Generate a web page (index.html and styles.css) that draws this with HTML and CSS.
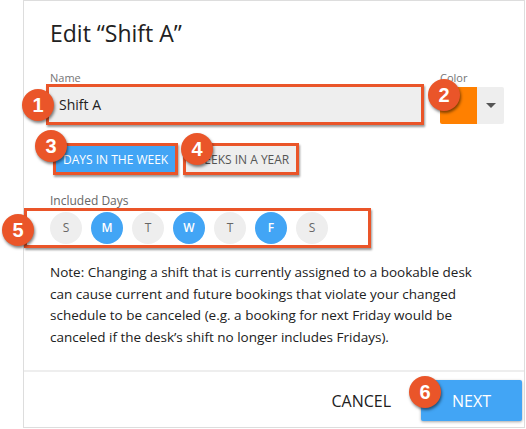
FILE: index.html
```html
<!DOCTYPE html>
<html lang="en">
  <head>
    <meta charset="UTF-8" />
    <meta name="viewport" content="width=device-width, initial-scale=1.0" />
    <title>Edit Shift A</title>
    <link rel="stylesheet" href="styles.css">
  </head>
  <body>
    <div class="dialog">
      <div class="dialog-header">
        <h2 class="dialog-title">Edit “Shift A”</h2>
      </div>
      <div class="dialog-body">
        <div class="field-row">
          <div class="field field-name">
            <label class="field-label">Name</label>
            <input class="name-input marked" type="text" value="Shift A" />
          </div>
          <div class="field field-color">
            <label class="field-label">Color</label>
            <div class="color-picker">
              <span class="swatch"></span>
              <span class="picker-drop"><span class="caret"></span></span>
            </div>
          </div>
        </div>

        <div class="mode-row">
          <button class="mode-btn active marked">DAYS IN THE WEEK</button>
          <button class="mode-btn marked">WEEKS IN A YEAR</button>
        </div>

        <div class="days-label">Included Days</div>
        <div class="days marked">
          <span class="day">S</span>
          <span class="day on">M</span>
          <span class="day">T</span>
          <span class="day on">W</span>
          <span class="day">T</span>
          <span class="day on">F</span>
          <span class="day">S</span>
        </div>

        <p class="note">
          Note: Changing a shift that is currently assigned to a bookable desk
          can cause current and future bookings that violate your changed
          schedule to be canceled (e.g. a booking for next Friday would be
          canceled if the desk’s shift no longer includes Fridays).
        </p>
      </div>
      <div class="dialog-footer">
        <button class="btn-cancel">CANCEL</button>
        <button class="btn-next">NEXT</button>
      </div>

      <!-- numbered callouts -->
      <span class="badge b1">1</span>
      <span class="badge b2">2</span>
      <span class="badge b3">3</span>
      <span class="badge b4">4</span>
      <span class="badge b5">5</span>
      <span class="badge b6">6</span>
    </div>
  </body>
</html>
```

FILE: styles.css
```css
:root {
  --blue: #42a5f5;
  --mark: #ea5529;
  --grey-bg: #eeeeee;
  --text: #212121;
}

body {
  margin: 0;
  background: #fff;
  font-family: "Open Sans", "Liberation Sans", sans-serif;
  color: var(--text);
}

.dialog {
  position: relative;
  box-sizing: border-box;
  width: 502px;
  margin-left: 23px;
  border: 1px solid #dddddd;
  background: #fff;
}

.dialog-header {
  padding: 16px 26px 0;
}
.dialog-title {
  margin: 0;
  font-size: 23px;
  font-weight: 400;
  line-height: 32px;
}

.dialog-body {
  padding: 22px 20px 22px 26px;
}

.field-row {
  display: flex;
  gap: 16px;
}
.field-name {
  flex: 1;
}
.field-color {
  width: 64px;
}
.field-label {
  display: block;
  font-size: 11px;
  line-height: 14px;
  color: #757575;
  margin-bottom: 2px;
}

.marked {
  border: 3px solid var(--mark);
  box-shadow: 1px 2px 2px rgba(0, 0, 0, 0.4);
}

.name-input {
  display: block;
  box-sizing: border-box;
  width: calc(100% + 4px);
  height: 41px;
  margin: -3px 0 0 -4px;
  padding: 0 10px;
  background: var(--grey-bg);
  font-family: inherit;
  font-size: 14px;
  color: var(--text);
  outline: none;
}

.color-picker {
  display: flex;
  height: 37px;
}
.swatch {
  width: 37px;
  background: #ff8000;
  border-radius: 2px 0 0 2px;
}
.picker-drop {
  flex: 1;
  display: flex;
  align-items: center;
  justify-content: center;
  background: var(--grey-bg);
  border-radius: 0 2px 2px 0;
}
.caret {
  width: 0;
  height: 0;
  border-left: 5px solid transparent;
  border-right: 5px solid transparent;
  border-top: 5px solid #555;
  margin-left: 1px;
}

.mode-row {
  display: flex;
  gap: 5px;
  margin: 18px 0 0 3px;
}
.mode-btn {
  height: 32px;
  padding: 0 7px;
  background: var(--grey-bg);
  color: #555;
  font-family: inherit;
  font-size: 12px;
  cursor: pointer;
}
.mode-btn.active {
  background: var(--blue);
  color: #fff;
}

.days-label {
  margin-top: 18px;
  font-size: 12px;
  line-height: 16px;
  color: #666;
}
.days {
  display: inline-flex;
  gap: 9px;
  margin: -1px 0 0 -26px;
  padding: 1px 40px 1px 23px;
}
.day {
  width: 32px;
  height: 32px;
  border-radius: 50%;
  background: var(--grey-bg);
  color: #666;
  font-size: 12px;
  line-height: 32px;
  text-align: center;
}
.day.on {
  background: var(--blue);
  color: #fff;
  font-weight: 600;
}

.note {
  margin: 14px 0 0;
  padding-right: 8px;
  font-size: 13.5px;
  line-height: 21.5px;
}

.dialog-footer {
  display: flex;
  justify-content: flex-end;
  align-items: center;
  border-top: 2px solid #eeeeee;
  padding: 8px 2px 6px 0;
}
.btn-cancel,
.btn-next {
  height: 41px;
  border: 0;
  font-family: inherit;
  font-size: 16px;
  cursor: pointer;
}
.btn-cancel {
  padding: 0 16px;
  margin-right: 14px;
  background: transparent;
  color: var(--text);
}
.btn-next {
  padding: 0 31px;
  background: var(--blue);
  color: #fff;
  border-radius: 2px;
  box-shadow: 0 1px 3px rgba(0, 0, 0, 0.35);
}

/* callout badges */
.badge {
  position: absolute;
  width: 32px;
  height: 32px;
  border-radius: 50%;
  background: var(--mark);
  color: #fff;
  font-family: "Liberation Sans", Arial, sans-serif;
  font-weight: 700;
  font-size: 20px;
  line-height: 32px;
  text-align: center;
  box-shadow: 1px 2px 3px rgba(0, 0, 0, 0.5);
}
.b1 { left: -2px; top: 88px; }
.b2 { left: 404px; top: 78px; }
.b3 { left: 11px; top: 129px; }
.b4 { left: 157px; top: 132px; }
.b5 { left: -22px; top: 213px; }
.b6 { left: 385px; top: 375px; }
```
